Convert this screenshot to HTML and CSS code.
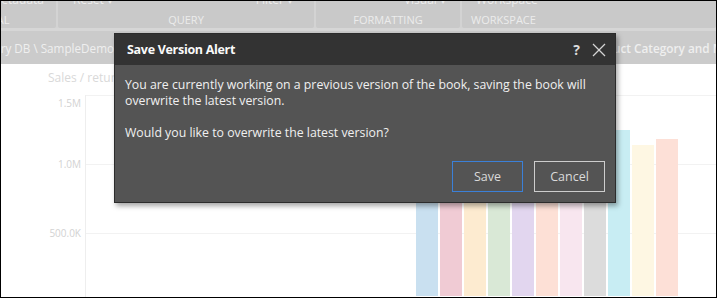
FILE: index.html
```html
<!DOCTYPE html>
<html lang="en">
<head>
  <meta charset="UTF-8">
  <title>Save Version Alert</title>
  <link rel="stylesheet" href="styles.css">
</head>
<body>
  <div class="app">
    <div class="ribbon">
      <div class="group group-general">
        <div class="group-items items-end"><span>Metadata</span></div>
        <div class="group-label">GENERAL</div>
      </div>
      <div class="group group-query">
        <div class="group-items items-between"><span>Reset ▾</span><span>Filter ▾</span></div>
        <div class="group-label">QUERY</div>
      </div>
      <div class="group group-formatting">
        <div class="group-items items-end"><span>Visual ▾</span></div>
        <div class="group-label">FORMATTING</div>
      </div>
      <div class="group group-workspace">
        <div class="group-items"><span>Workspace</span></div>
        <div class="group-label label-left">WORKSPACE</div>
      </div>
    </div>

    <div class="crumb">
      <div class="crumb-path"><span>Inventory DB \ SampleDemo</span></div>
      <span class="crumb-title">Product Category and Month</span>
    </div>

    <div class="chart">
      <div class="chart-title">Sales / returns</div>
      <div class="plot">
        <div class="tick tick-top"><span>1.5M</span></div><div class="gridline"></div>
        <div class="tick"><span>1.0M</span></div><div class="gridline"></div>
        <div class="tick"><span>500.0K</span></div><div class="gridline"></div>
        <div class="bars">
          <div class="bar c1" style="height: 150px"></div>
          <div class="bar c2" style="height: 160px"></div>
          <div class="bar c3" style="height: 145px"></div>
          <div class="bar c4" style="height: 155px"></div>
          <div class="bar c5" style="height: 140px"></div>
          <div class="bar c6" style="height: 150px"></div>
          <div class="bar c7" style="height: 148px"></div>
          <div class="bar c8" style="height: 158px"></div>
          <div class="bar c9" style="height: 166px"></div>
          <div class="bar c10" style="height: 151px"></div>
          <div class="bar c11" style="height: 157px"></div>
        </div>
      </div>
    </div>
  </div>

  <div class="modal">
    <div class="modal-header">
      <span class="modal-title">Save Version Alert</span>
      <span class="modal-help">?</span>
      <svg class="modal-close" width="14" height="14" viewBox="0 0 14 14">
        <line x1="1" y1="1" x2="13" y2="13" stroke="#d4d4d4" stroke-width="1.2"/>
        <line x1="13" y1="1" x2="1" y2="13" stroke="#d4d4d4" stroke-width="1.2"/>
      </svg>
    </div>
    <div class="modal-body">
      <p>You are currently working on a previous version of the book, saving the book will overwrite the latest version.</p>
      <p>Would you like to overwrite the latest version?</p>
      <div class="modal-footer">
        <button class="btn btn-primary">Save</button>
        <button class="btn">Cancel</button>
      </div>
    </div>
  </div>
</body>
</html>
```

FILE: styles.css
```css
body {
  margin: 0;
  width: 717px;
  height: 298px;
  position: relative;
  font-family: 'Open Sans', 'Noto Sans', sans-serif;
  overflow: hidden;
}
.app {
  box-sizing: border-box;
  width: 717px;
  height: 298px;
  border: 1px solid #000;
  overflow: hidden;
  display: flex;
  flex-direction: column;
  background-color: #fff;
}
.ribbon {
  display: flex;
  gap: 2px;
  height: 27px;
  flex-shrink: 0;
  background-color: #d3d3d3;
  border-bottom: 3px solid #d6d6d6;
  color: #ececec;
}
.group {
  display: flex;
  flex-direction: column;
  background-color: #c9c9c9;
  border-radius: 0 0 2px 2px;
  overflow: hidden;
}
.group-general {
  width: 141px;
  margin-left: -86px;
}
.group-query {
  width: 256px;
}
.group-formatting {
  width: 144px;
}
.group-workspace {
  flex: 1;
}
.group-items {
  display: flex;
  height: 11px;
  font-size: 12px;
  line-height: 12px;
  padding: 0 14px;
}
.group-items span {
  margin-top: -7px;
  white-space: nowrap;
}
.items-end {
  justify-content: flex-end;
}
.items-between {
  justify-content: space-between;
  padding: 0 21px 0 15px;
}
.group-general .group-items {
  padding-right: 12px;
}
.group-label {
  text-align: center;
  font-size: 11px;
  line-height: 17px;
  white-space: nowrap;
}
.label-left {
  text-align: left;
  padding-left: 9px;
}
.crumb {
  display: flex;
  height: 33px;
  flex-shrink: 0;
  align-items: center;
  background-color: #cbcbcb;
  color: #efefef;
  white-space: nowrap;
}
.crumb-path {
  flex-shrink: 0;
  width: 113px;
  display: flex;
  justify-content: flex-end;
  overflow: hidden;
  font-size: 11.7px;
}
.crumb-title {
  flex-shrink: 0;
  margin-left: 472px;
  font-size: 11.8px;
  font-weight: 600;
}
.chart {
  flex: 1;
  display: flex;
  flex-direction: column;
}
.chart-title {
  padding: 6px 0 0 47px;
  font-size: 12px;
  line-height: 16px;
  color: #d9d9d9;
}
.plot {
  position: relative;
  margin-top: 9px;
  display: grid;
  grid-template-columns: 85px 1fr;
  grid-auto-rows: 69px;
}
.tick {
  border-right: 1px solid #eeeeee;
  font-size: 10px;
  color: #d2d2d2;
  text-align: right;
  padding-right: 4px;
}
.tick span {
  display: block;
  line-height: 12px;
  margin-top: -6px;
}
.tick-top span {
  margin-top: 2px;
}
.gridline {
  border-top: 1px solid #f2f2f2;
}
.bars {
  position: absolute;
  left: 415px;
  bottom: 6px;
  display: flex;
  align-items: flex-end;
  gap: 2px;
}
.bar {
  width: 22px;
}
.c1 { background-color: #c9e0f0; }
.c2 { background-color: #f0cbd4; }
.c3 { background-color: #fdebd0; }
.c4 { background-color: #d9e8d6; }
.c5 { background-color: #e2d6ef; }
.c6 { background-color: #fde0d6; }
.c7 { background-color: #f8e6ef; }
.c8 { background-color: #dcdcdc; }
.c9 { background-color: #c8edf3; }
.c10 { background-color: #fef7e3; }
.c11 { background-color: #fde0d7; }

.modal {
  position: absolute;
  left: 114px;
  top: 33px;
  width: 502px;
  height: 170px;
  box-sizing: border-box;
  border: 1px solid #2c2c2c;
  background-color: #545454;
  box-shadow: 2px 3px 5px rgba(0, 0, 0, 0.35);
  display: flex;
  flex-direction: column;
  color: #f0f0f0;
}
.modal-header {
  display: flex;
  align-items: center;
  height: 31px;
  padding: 0 9px 0 12px;
  background-color: #333333;
}
.modal-title {
  flex: 1;
  font-size: 12.5px;
  font-weight: 700;
  letter-spacing: -0.3px;
  color: #fafafa;
}
.modal-help {
  font-size: 14px;
  font-weight: 700;
  color: #dcdcdc;
  margin-right: 12px;
}
.modal-body {
  flex: 1;
  padding: 12px 10px 10px 10px;
  font-size: 12.3px;
  line-height: 16px;
}
.modal-body p {
  margin: 0 0 16px;
}
.modal-body p + p {
  margin-bottom: 0;
}
.modal-footer {
  display: flex;
  justify-content: flex-end;
  gap: 11px;
  margin-top: 20px;
}
.btn {
  width: 71px;
  height: 31px;
  background-color: transparent;
  border: 1px solid #cdcdcd;
  color: #dadada;
  font-family: inherit;
  font-size: 12.5px;
  padding: 0;
}
.btn-primary {
  border-color: #3b80d8;
}
```
